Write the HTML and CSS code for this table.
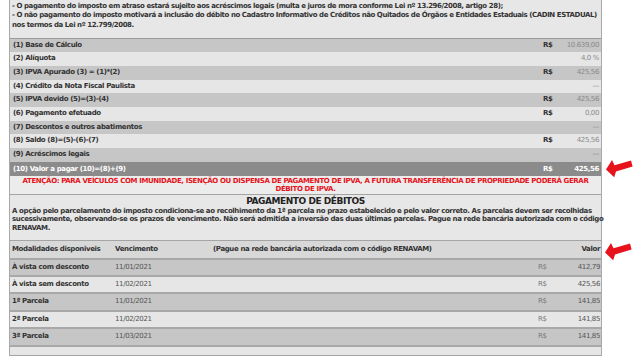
FILE: index.html
```html
<!DOCTYPE html>
<html lang="pt-BR">
<head>
<meta charset="utf-8">
<title>IPVA - Pagamento de Débitos</title>
<link rel="stylesheet" href="styles.css">
</head>
<body>
<div class="panel">
  <div class="note">
    - O pagamento do imposto em atraso estará sujeito aos acréscimos legais (multa e juros de mora conforme Lei nº 13.296/2008, artigo 28);<br>
    - O não pagamento do imposto motivará a inclusão do débito no Cadastro Informativo de Créditos não Quitados de Órgãos e Entidades Estaduais (CADIN ESTADUAL)<br>
    nos termos da Lei nº 12.799/2008.
  </div>
  <table class="calc">
    <colgroup><col class="c-label"><col class="c-rs"><col class="c-val"></colgroup>
    <tr class="dark"><td>(1) Base de Cálculo</td><td class="rs">R$</td><td class="val">10.639,00</td></tr>
    <tr class="light"><td>(2) Alíquota</td><td class="rs"></td><td class="val">4,0 %</td></tr>
    <tr class="dark"><td>(3) IPVA Apurado (3) = (1)*(2)</td><td class="rs">R$</td><td class="val">425,56</td></tr>
    <tr class="light"><td>(4) Crédito da Nota Fiscal Paulista</td><td class="rs"></td><td class="val">---</td></tr>
    <tr class="dark"><td>(5) IPVA devido (5)=(3)-(4)</td><td class="rs">R$</td><td class="val">425,56</td></tr>
    <tr class="light"><td>(6) Pagamento efetuado</td><td class="rs">R$</td><td class="val">0,00</td></tr>
    <tr class="dark"><td>(7) Descontos e outros abatimentos</td><td class="rs"></td><td class="val">---</td></tr>
    <tr class="light"><td>(8) Saldo (8)=(5)-(6)-(7)</td><td class="rs">R$</td><td class="val">425,56</td></tr>
    <tr class="dark"><td>(9) Acréscimos legais</td><td class="rs"></td><td class="val">---</td></tr>
    <tr class="total"><td>(10) Valor a pagar (10)=(8)+(9)</td><td class="rs">R$</td><td class="val">425,56</td></tr>
  </table>
  <div class="atencao">
    ATENÇÃO: PARA VEÍCULOS COM IMUNIDADE, ISENÇÃO OU DISPENSA DE PAGAMENTO DE IPVA, A FUTURA TRANSFERÊNCIA DE PROPRIEDADE PODERÁ GERAR<br>
    DÉBITO DE IPVA.
  </div>
  <div class="pag">
    <h2 class="pag-title">PAGAMENTO DE DÉBITOS</h2>
    <p class="pag-text">A opção pelo parcelamento do imposto condiciona-se ao recolhimento da 1ª parcela no prazo estabelecido e pelo valor correto. As parcelas devem ser recolhidas<br>
    sucessivamente, observando-se os prazos de vencimento. Não será admitida a inversão das duas últimas parcelas. Pague na rede bancária autorizada com o código<br>
    RENAVAM.</p>
  </div>
  <table class="parc">
    <colgroup><col class="p1"><col class="p2"><col class="p3"><col class="p4"><col class="p5"></colgroup>
    <tr class="head"><td>Modalidades disponiveis</td><td>Vencimento</td><td>(Pague na rede bancária autorizada com o código RENAVAM)</td><td></td><td class="val">Valor</td></tr>
    <tr class="dark"><td class="lbl">À vista com desconto</td><td class="dt">11/01/2021</td><td></td><td class="rs">R$</td><td class="val">412,79</td></tr>
    <tr class="light"><td class="lbl">À vista sem desconto</td><td class="dt">11/02/2021</td><td></td><td class="rs">R$</td><td class="val">425,56</td></tr>
    <tr class="dark"><td class="lbl">1ª Parcela</td><td class="dt">11/01/2021</td><td></td><td class="rs">R$</td><td class="val">141,85</td></tr>
    <tr class="light"><td class="lbl">2ª Parcela</td><td class="dt">11/02/2021</td><td></td><td class="rs">R$</td><td class="val">141,85</td></tr>
    <tr class="dark"><td class="lbl">3ª Parcela</td><td class="dt">11/03/2021</td><td></td><td class="rs">R$</td><td class="val">141,85</td></tr>
    <tr class="light empty"><td colspan="5"></td></tr>
  </table>
</div>
<svg class="arrow arrow-1" width="30" height="21" viewBox="0 0 30 21"><polygon points="2,11.5 8,2 10.5,7.2 27,2.6 28.6,8.6 12,13.6 10.2,19.2" fill="#e8121c"/></svg>
<svg class="arrow arrow-2" width="30" height="21" viewBox="0 0 30 21"><polygon points="2,11.5 8,2 10.5,7.2 27,2.6 28.6,8.6 12,13.6 10.2,19.2" fill="#e8121c"/></svg>
</body>
</html>
```
FILE: styles.css
```css
html, body {
  margin: 0;
  padding: 0;
  background: #ffffff;
}
body {
  font-family: "DejaVu Sans", Verdana, sans-serif;
  font-size: 7px;
  font-weight: bold;
  letter-spacing: -0.38px;
  color: #333333;
  position: relative;
  width: 640px;
  height: 360px;
  overflow: hidden;
}
.panel {
  margin-left: 9px;
  width: 591px;
  border-left: 1px solid #a9a9a9;
  border-right: 1px solid #a9a9a9;
  background: #e7e7e7;
}
.note {
  padding: 1.5px 2px 7.5px 2px;
  line-height: 9.5px;
  height: 28.5px;
  white-space: nowrap;
  letter-spacing: -0.43px;
  border-bottom: 1.5px solid #9c9c9c;
}
table {
  width: 100%;
  border-collapse: collapse;
  table-layout: fixed;
}
td {
  padding: 0;
  white-space: nowrap;
  overflow: visible;
}
.calc .c-label { width: 533px; }
.calc .c-rs { width: 18px; }
.calc td { height: 13.67px; line-height: 13.67px; }
.calc td:first-child { padding-left: 3px; }
.calc .val { text-align: right; padding-right: 2px; font-weight: normal; color: #8a8a8a; }
.calc .rs { color: #333333; }
.dark { background: #c6c6c6; }
.light { background: #e6e6e6; }
.calc tr.total { background: #8b8b8b; color: #ffffff; }
.calc tr.total td { height: 14px; line-height: 14px; }
.calc tr.total .rs, .calc tr.total .val { color: #ffffff; font-weight: bold; }
.atencao {
  background: #ececec;
  color: #e6121b;
  text-align: center;
  line-height: 8.5px;
  padding: 1px 0 0.5px;
  white-space: nowrap;
}
.pag {
  border-top: 1.5px solid #a4a4a4;
  border-bottom: 1.5px solid #a4a4a4;
  padding: 0.5px 2px 8px 2px;
}
.pag-title {
  margin: 0;
  font-size: 9px;
  letter-spacing: -0.45px;
  line-height: 11px;
  text-align: center;
  color: #222222;
}
.pag-text {
  margin: 0;
  line-height: 8.5px;
  white-space: nowrap;
  color: #333333;
}
.parc .p1 { width: 103px; }
.parc .p2 { width: 98px; }
.parc .p3 { width: 325px; }
.parc .p4 { width: 24px; }
.parc td { padding: 0 0 0 2px; height: 15.4px; line-height: 15.4px; }
.parc tr { border-top: 2px solid #a8a8a8; }
.parc tr.head { border-top: none; background: #d8d8d8; }
.parc tr.head td { height: 16.5px; line-height: 16.5px; }
.parc .val { text-align: right; padding-right: 1px; }
.parc .dt { font-weight: normal; color: #555555; }
.parc .rs { font-weight: normal; color: #777777; }
.parc tr:not(.head) .val { font-weight: normal; color: #555555; }
.parc tr.empty td { height: 8px; line-height: 8px; }
.parc tr.empty { border-bottom: 1.5px solid #a4a4a4; }
.arrow {
  position: absolute;
}
.arrow-1 { left: 604px; top: 158px; }
.arrow-2 { left: 603px; top: 241px; }
```
